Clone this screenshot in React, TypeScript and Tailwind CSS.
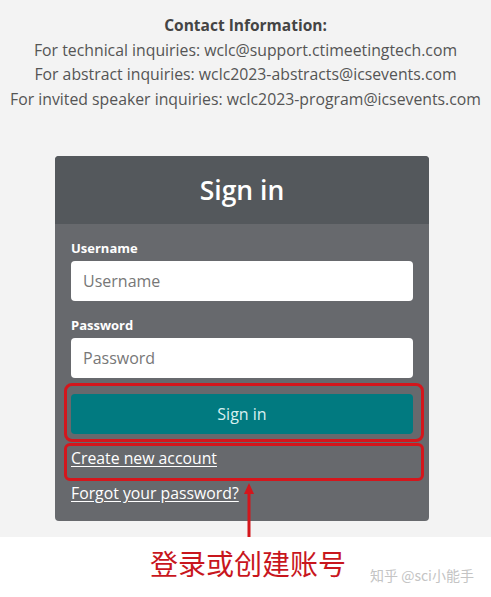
import React from "react";

export default function App() {
  const font = { fontFamily: '"Open Sans", "Noto Sans", sans-serif' };
  return (
    <div className="w-[491px] h-[597px] flex flex-col bg-white overflow-hidden" style={font}>
      <div className="h-[537px] bg-[#f3f3f3] flex flex-col relative">
        <div className="pt-[13px] flex flex-col items-center text-[#555555] text-[15.8px] leading-[24.5px]">
          <div className="font-bold text-[#444444] text-[15.5px]">Contact Information:</div>
          <div>For technical inquiries: wclc@support.ctimeetingtech.com</div>
          <div>For abstract inquiries: wclc2023-abstracts@icsevents.com</div>
          <div className="whitespace-nowrap">For invited speaker inquiries: wclc2023-program@icsevents.com</div>
        </div>
        <div className="ml-[55px] mt-[45px] w-[374px] rounded-[4px] overflow-hidden bg-[#67696d] flex flex-col">
          <div className="h-[68px] bg-[#54585c] flex items-center justify-center">
            <span className="text-white text-[26.5px] font-semibold leading-none">Sign in</span>
          </div>
          <div className="relative px-[16px] pt-[15px] pb-[17px] flex flex-col">
            <label className="text-white text-[13px] font-bold leading-[18px]">Username</label>
            <div className="mt-[4px] h-[40px] bg-white rounded-[4px] flex items-center px-[12px] text-[16px] text-[#777777]">Username</div>
            <label className="mt-[15px] text-white text-[13px] font-bold leading-[18px]">Password</label>
            <div className="mt-[4px] h-[40px] bg-white rounded-[4px] flex items-center px-[12px] text-[16px] text-[#777777]">Password</div>
            <div className="mt-[16px] h-[40px] bg-[#017a80] rounded-[4px] flex items-center justify-center text-[16px] text-[#d8f0f0]">Sign in</div>
            <a className="mt-[13px] text-white text-[15.8px] leading-[22px] underline underline-offset-2 self-start">Create new account</a>
            <a className="mt-[13px] text-white text-[15.8px] leading-[22px] underline underline-offset-2 self-start">Forgot your password?</a>
            <div className="absolute left-[9px] top-[159px] w-[360px] h-[59px] border-[3px] border-[#d4161c] rounded-[8px]" />
            <div className="absolute left-[9px] top-[219px] w-[360px] h-[38px] border-[3px] border-[#d4161c] rounded-[6px]" />
          </div>
        </div>
        <div className="absolute left-[243px] top-[483px] flex flex-col items-center">
          <svg width="12" height="56" viewBox="0 0 12 56">
            <polygon points="6,0 11,11 1,11" fill="#d4161c" />
            <rect x="4.5" y="8" width="3" height="48" fill="#d4161c" />
          </svg>
        </div>
      </div>
      <div className="relative flex-1 bg-white">
        <div
          className="absolute left-[150px] top-[7px] text-[28px] leading-[38px] text-[#c8161d]"
          style={{ fontFamily: '"Noto Sans CJK SC", sans-serif' }}
        >
          登录或创建账号
        </div>
        <div
          className="absolute left-[370px] top-[29px] text-[14px] leading-[18px] text-[#c4c4c4]"
          style={{ fontFamily: '"Noto Sans CJK SC", sans-serif' }}
        >
          知乎 @sci小能手
        </div>
      </div>
    </div>
  );
}
